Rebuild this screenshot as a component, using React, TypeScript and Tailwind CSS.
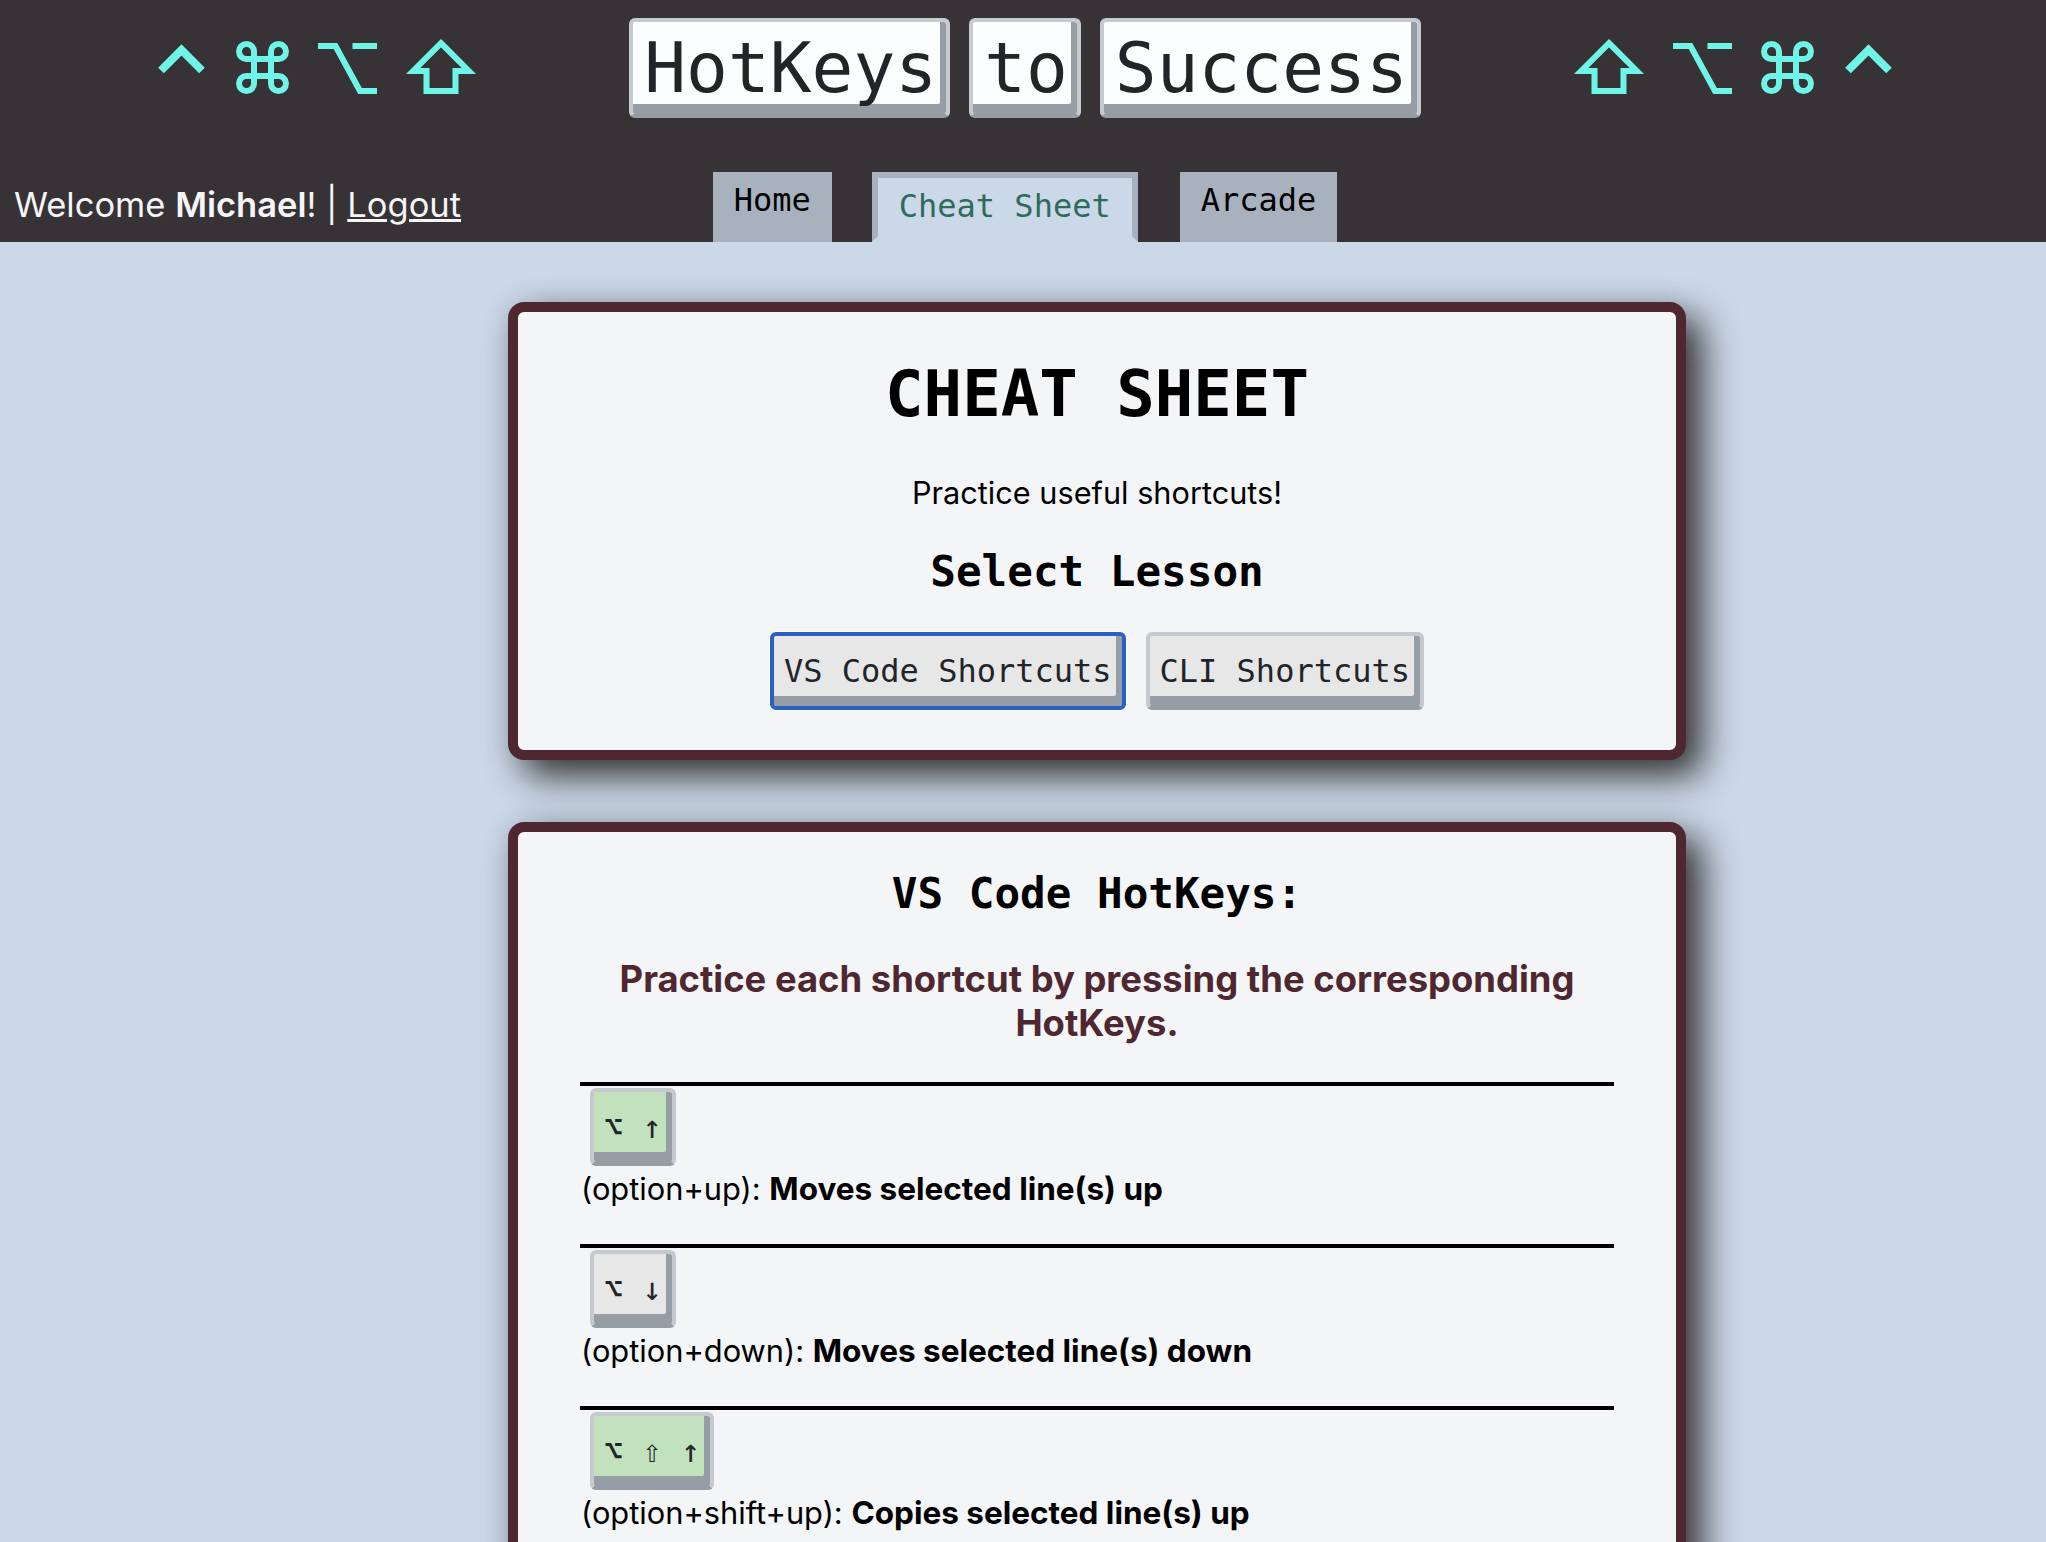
import type { ReactNode } from "react";

const mono = "font-['DejaVu_Sans_Mono',monospace]";

// keyboard key look: light border, darker inner right/bottom edge
const Key = ({ children, className }: { children: ReactNode; className: string }) => (
  <span className={`inline-block rounded-[6px] border-4 ${mono} ${className}`}>{children}</span>
);

const keyEdge = "border-[#c6cad0] border-b-[#969da5] shadow-[inset_-6px_-10px_0_#969da5]";

const ControlIcon = ({ className }: { className: string }) => (
  <svg viewBox="0 0 47 30" className={`h-[30px] w-[47px] ${className}`} fill="none" stroke="currentColor" strokeWidth="8">
    <path d="M3 26.5 L23.5 6 L44 26.5" />
  </svg>
);

const CommandIcon = () => (
  <svg viewBox="0 0 53 53" className="mt-[2px] h-[53px] w-[53px]" fill="none" stroke="currentColor" strokeWidth="6">
    <path d="M18 10.5V42.5M35 10.5V42.5M10.5 18H42.5M10.5 35H42.5M18 10.5A7.5 7.5 0 1 0 10.5 18M35 10.5A7.5 7.5 0 1 1 42.5 18M18 42.5A7.5 7.5 0 1 1 10.5 35M35 42.5A7.5 7.5 0 1 0 42.5 35" />
  </svg>
);

const OptionIcon = () => (
  <svg viewBox="0 0 59 51" className="mt-[4px] h-[51px] w-[59px]" fill="none" stroke="currentColor" strokeWidth="6">
    <path d="M0 3H17.5L42 48H59M34.5 3H59" />
  </svg>
);

const ShiftIcon = () => (
  <svg viewBox="0 0 70 55" className="h-[55px] w-[70px]" fill="none" stroke="currentColor" strokeWidth="6">
    <path d="M35 4.2L62.8 32H49.5V52H20.5V32H7.2Z" />
  </svg>
);

const TitleKey = ({ text }: { text: string }) => (
  <Key className={`${keyEdge} bg-[#fcfdfe] pt-[4px] pr-[9px] pb-[5px] pl-[11px] text-[69.5px] leading-[83px] text-[#212529]`}>
    {text}
  </Key>
);

const Shortcut = ({
  keys,
  combo,
  label,
  done,
}: {
  keys: string;
  combo: string;
  label: string;
  done: boolean;
}) => (
  <div className="h-[162px] border-t-4 border-black">
    <div className="mt-[2px] ml-[10px] flex">
      <Key
        className={`${keyEdge} ${done ? "bg-[#c1e2bd]" : "bg-[#e7e7e7]"} whitespace-pre px-[10px] pt-[17px] pb-[16px] text-[32px] leading-[37px] text-[#212529]`}
      >
        {keys}
      </Key>
    </div>
    <p className="mt-[3px] pl-[1px] text-[30.8px] leading-[40px] text-black">
      ({combo}): <b className="text-[31.5px] font-bold">{label}</b>
    </p>
  </div>
);

const App = () => {
  return (
    <div className="h-[1542px] overflow-hidden bg-[#cbd8e8] font-['Inter',sans-serif]">
      <header className="h-[242px] bg-[#373236]">
        <div className="flex justify-evenly pt-[18px]">
          <div className="ml-[4px] flex gap-[29px] pt-[21px] text-[#6ff5e8]">
            <ControlIcon className="mt-[5px] mr-[2px]" />
            <CommandIcon />
            <OptionIcon />
            <ShiftIcon />
          </div>
          <div className="flex gap-[19px]">
            <TitleKey text="HotKeys" />
            <TitleKey text="to" />
            <TitleKey text="Success" />
          </div>
          <div className="flex gap-[29px] pt-[21px] text-[#6ff5e8]">
            <ShiftIcon />
            <OptionIcon />
            <CommandIcon />
            <ControlIcon className="mt-[5px] ml-[2px]" />
          </div>
        </div>

        <div className="mt-[54px] grid h-[70px] grid-cols-[1fr_auto_1fr] items-end">
          <p className="pb-[15px] pl-[14px] text-[34.5px] leading-[44px] text-[#f5f5f5]">
            Welcome <b className="font-semibold">Michael</b>! | <a className="underline">Logout</a>
          </p>
          <nav className={`ml-[4px] flex h-[70px] gap-[40px] text-[32px] leading-[37px] ${mono}`}>
            <a className="h-full bg-[#a8b2be] px-[21px] pt-[10px] text-black">Home</a>
            <a className="h-full border-[6px] border-[#a8b2be] border-b-[#cbd8e8] bg-[#cbd8e8] px-[21px] pt-[10px] text-[#2f6b5c]">
              Cheat Sheet
            </a>
            <a className="ml-[2px] h-full bg-[#a8b2be] px-[21px] pt-[10px] text-black">Arcade</a>
          </nav>
          <div />
        </div>
      </header>

      <main className="pt-[60px] pl-[508px]">
        <section className="h-[458px] w-[1178px] rounded-[16px] border-[10px] border-[#4e2730] bg-[#f4f5f7] pt-[45px] text-center text-black shadow-[16px_16px_36px_#333333,0_0_30px_rgba(0,0,0,0.08)]">
          <h1 className={`text-[64px] leading-[75px] font-bold ${mono}`}>CHEAT SHEET</h1>
          <p className="mt-[41px] text-[30.7px] leading-[40px]">Practice useful shortcuts!</p>
          <h2 className={`mt-[33px] text-[42.6px] leading-[50px] font-bold ${mono}`}>Select Lesson</h2>
          <div className="mt-[36px] flex justify-center gap-[20px]">
            <Key className="border-[#2a5fc4] bg-[#e7e7e7] px-[10px] pt-[17px] pb-[16px] text-[32px] leading-[37px] text-[#212529] shadow-[inset_-6px_-10px_0_#969da5,0_0_0_1px_#ffffff]">
              VS Code Shortcuts
            </Key>
            <Key className={`${keyEdge} bg-[#e7e7e7] px-[10px] pt-[17px] pb-[16px] text-[32px] leading-[37px] text-[#212529]`}>
              CLI Shortcuts
            </Key>
          </div>
        </section>

        <section className="mt-[62px] w-[1178px] rounded-[16px] border-[10px] border-[#4e2730] bg-[#f4f5f7] px-[62px] pt-[36px] shadow-[16px_16px_36px_#333333,0_0_30px_rgba(0,0,0,0.08)]">
          <h2 className={`text-center text-[42.6px] leading-[50px] font-bold text-black ${mono}`}>VS Code HotKeys:</h2>
          <p className="mt-[39px] mb-[37px] text-center text-[36.4px] leading-[44px] font-bold text-[#4e2730]">
            Practice each shortcut by pressing the corresponding HotKeys.
          </p>
          <Shortcut keys="⌥ ↑" combo="option+up" label="Moves selected line(s) up" done />
          <Shortcut keys="⌥ ↓" combo="option+down" label="Moves selected line(s) down" done={false} />
          <Shortcut keys="⌥ ⇧ ↑" combo="option+shift+up" label="Copies selected line(s) up" done />
        </section>
      </main>
    </div>
  );
};

export default App;
